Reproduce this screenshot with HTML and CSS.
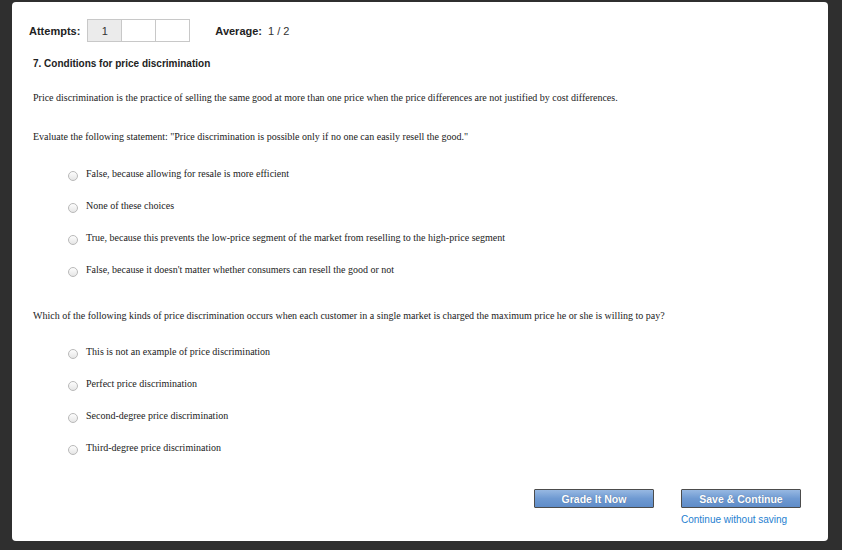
FILE: index.html
```html
<!DOCTYPE html>
<html lang="en">

<head>
  <meta charset="UTF-8">
  <title>Conditions for price discrimination</title>
  <link rel="stylesheet" href="styles.css">
</head>

<body>

  <div class="card">
    <div class="attempts">
      <span class="label">Attempts:</span>
      <div class="boxes">
        <span class="box used">1</span>
        <span class="box"></span>
        <span class="box"></span>
      </div>
      <span class="label avg">Average:</span>
      <span class="score">1 / 2</span>
    </div>

    <h2 class="title">7. Conditions for price discrimination</h2>

    <p class="text intro">Price discrimination is the practice of selling the same good at more than one price when the price differences are not justified by cost differences.</p>

    <p class="text question">Evaluate the following statement: "Price discrimination is possible only if no one can easily resell the good."</p>
    <ul class="options">
      <li><span class="radio"></span>False, because allowing for resale is more efficient</li>
      <li><span class="radio"></span>None of these choices</li>
      <li><span class="radio"></span>True, because this prevents the low-price segment of the market from reselling to the high-price segment</li>
      <li><span class="radio"></span>False, because it doesn't matter whether consumers can resell the good or not</li>
    </ul>

    <p class="text question q2">Which of the following kinds of price discrimination occurs when each customer in a single market is charged the maximum price he or she is willing to pay?</p>
    <ul class="options">
      <li><span class="radio"></span>This is not an example of price discrimination</li>
      <li><span class="radio"></span>Perfect price discrimination</li>
      <li><span class="radio"></span>Second-degree price discrimination</li>
      <li><span class="radio"></span>Third-degree price discrimination</li>
    </ul>

    <div class="actions">
      <button class="btn">Grade It Now</button>
      <div class="save">
        <button class="btn">Save &amp; Continue</button>
        <a href="#" class="skip">Continue without saving</a>
      </div>
    </div>
  </div>

</body>

</html>
```

FILE: styles.css
```css
body {
  margin: 0;
  background-color: #2f2f2f;
  font-family: "Liberation Sans", Arial, sans-serif;
  color: #222;
}

.card {
  background-color: #fff;
  margin: 2px 14px 0 12px;
  height: 539px;
  border-radius: 4px;
  padding: 17px 27px 0 21px;
  box-sizing: border-box;
}

/* Attempts row */
.attempts {
  display: flex;
  align-items: center;
  height: 23px;
  margin-left: -4px;
  font-size: 11px;
}

.label {
  font-weight: bold;
  margin-right: 7px;
}

.boxes {
  display: flex;
}

.box {
  width: 33px;
  height: 21px;
  border: 1px solid #c8c8c8;
  margin-right: -1px;
  display: flex;
  align-items: center;
  justify-content: center;
  color: #333;
}

.box.used {
  background-color: #ebebeb;
}

.avg {
  margin-left: 26px;
  margin-right: 6px;
}

.score {
  color: #333;
}

.title {
  font-size: 10px;
  line-height: 14px;
  margin: 15px 0 0 0;
}

.text {
  font-family: "Liberation Serif", "Times New Roman", serif;
  font-size: 10px;
  line-height: 14px;
  margin: 0;
}

.intro {
  margin-top: 20px;
}

.question {
  margin-top: 25px;
}

.question.q2 {
  margin-top: 32px;
}

.options {
  list-style: none;
  margin: 23px 0 0 35px;
  padding: 0;
  display: flex;
  flex-direction: column;
  gap: 18px;
  font-family: "Liberation Serif", "Times New Roman", serif;
  font-size: 10px;
  line-height: 14px;
}

.q2 + .options {
  margin-top: 22px;
}

.options li {
  display: flex;
  align-items: center;
}

.radio {
  width: 8px;
  height: 8px;
  border: 1px solid #b9b9b9;
  border-radius: 50%;
  background: linear-gradient(#fdfdfd, #e6e6e6);
  margin: 3px 8px 0 0;
  flex-shrink: 0;
}

/* Buttons */
.actions {
  display: flex;
  justify-content: flex-end;
  gap: 27px;
  margin-top: 34px;
}

.btn {
  width: 120px;
  height: 19px;
  padding: 0;
  border: 1px solid #4c4c4c;
  border-radius: 1px;
  background: linear-gradient(#97b8e2, #6f9ad2 50%, #5f8cc8);
  color: #fff;
  font-family: "Liberation Sans", Arial, sans-serif;
  font-weight: bold;
  font-size: 10.5px;
  text-shadow: 0 0 1px rgba(0, 0, 0, 0.3);
  cursor: pointer;
}

.save {
  display: flex;
  flex-direction: column;
}

.skip {
  margin-top: 5px;
  font-size: 10px;
  line-height: 14px;
  color: #1f7fd0;
  text-decoration: none;
}
```
